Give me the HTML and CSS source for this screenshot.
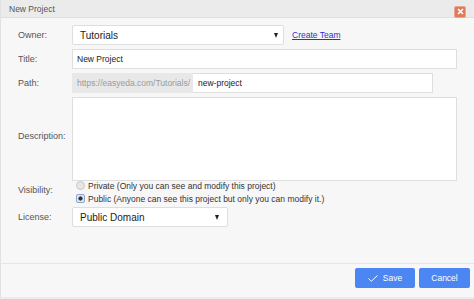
FILE: index.html
```html
<!DOCTYPE html>
<html lang="en">
<head>
    <meta charset="UTF-8">
    <title>New Project</title>
    <link rel="stylesheet" href="styles.css">
</head>
<body>
    <div class="dialog">
        <div class="dialog-title">
            <span>New Project</span>
            <span class="close-btn">
                <svg width="7" height="7" viewBox="0 0 7 7"><path d="M1 1L6 6M6 1L1 6" stroke="#fff" stroke-width="1.6"/></svg>
            </span>
        </div>

        <div class="dialog-body">
            <div class="row">
                <label>Owner:</label>
                <div class="select owner-select">Tutorials<span class="arrow"></span></div>
                <a href="#" class="link">Create Team</a>
            </div>

            <div class="row">
                <label>Title:</label>
                <div class="input wide">New Project</div>
            </div>

            <div class="row">
                <label>Path:</label>
                <div class="path-prefix">https://easyeda.com/Tutorials/</div>
                <div class="input path-input">new-project</div>
            </div>

            <div class="row desc-row">
                <label>Description:</label>
                <div class="textarea"></div>
            </div>

            <div class="row vis-row">
                <label>Visibility:</label>
                <div class="radios">
                    <div class="radio-line"><span class="radio"></span>Private (Only you can see and modify this project)</div>
                    <div class="radio-line"><span class="radio checked"></span>Public (Anyone can see this project but only you can modify it.)</div>
                </div>
            </div>

            <div class="row license-row">
                <label>License:</label>
                <div class="select license-select">Public Domain<span class="arrow"></span></div>
            </div>
        </div>

        <div class="dialog-footer">
            <button class="btn save-btn">
                <svg width="10" height="7" viewBox="0 0 10 7"><path d="M0.5 3.5L3.3 6.2L9.5 0.5" fill="none" stroke="#fff" stroke-width="1"/></svg>
                Save
            </button>
            <button class="btn cancel-btn">Cancel</button>
        </div>
    </div>
</body>
</html>
```

FILE: styles.css
```css
/* General */
body {
    margin: 0;
    padding: 0;
    font-family: "Liberation Sans", Arial, sans-serif;
    background-color: #f7f7f7;
}

.dialog {
    width: 474px;
    height: 299px;
    box-sizing: border-box;
    display: flex;
    flex-direction: column;
    background-color: #f7f7f7;
    border-left: 1px solid #e2e2e2;
    border-bottom: 2px solid #ebebeb;
}

/* Title bar */
.dialog-title {
    height: 17px;
    display: flex;
    align-items: center;
    justify-content: space-between;
    padding: 0 8px 0 8px;
    background-color: #ebebeb;
    border-bottom: 1px solid #dedede;
    color: #555;
    font-size: 8.5px;
}

.close-btn {
    width: 10px;
    height: 10px;
    margin-top: 6px;
    border-radius: 2px;
    background-color: #df7a58;
    border: 1px solid #eaa68c;
    display: flex;
    align-items: center;
    justify-content: center;
}

/* Form */
.dialog-body {
    flex: 1;
    padding: 7px 0 0 17px;
}

.row {
    display: flex;
    align-items: center;
    margin-bottom: 4px;
}

.row label {
    width: 54px;
    color: #555;
    font-size: 9px;
}

.select, .input, .textarea, .path-prefix {
    box-sizing: border-box;
    height: 20px;
    border: 1px solid #dedede;
    background-color: #fff;
    font-size: 8.5px;
    color: #222;
    display: flex;
    align-items: center;
    padding: 0 4px;
}

.select {
    justify-content: space-between;
    font-size: 10px;
    color: #222;
    padding: 0 5px 0 7px;
    border-radius: 2px;
}

.arrow {
    width: 0;
    height: 0;
    border-left: 2.5px solid transparent;
    border-right: 2.5px solid transparent;
    border-top: 5px solid #222;
}

.owner-select {
    width: 212px;
}

.license-select {
    width: 156px;
    padding-right: 8px;
}

.link {
    margin-left: 8px;
    color: #2f2fcc;
    font-size: 8.5px;
}

.wide {
    width: 385px;
}

.path-prefix {
    width: 121px;
    background-color: #e8e8e8;
    border-color: #e8e8e8;
    color: #9a9a9a;
}

.path-input {
    width: 240px;
    border-left: none;
    padding-left: 5px;
}

.desc-row {
    margin-bottom: 0;
}

.desc-row label {
    margin-top: -6px;
}

.textarea {
    width: 385px;
    height: 84px;
}

/* Radios */
.vis-row {
    margin-top: -2px;
    margin-bottom: 2px;
}

.vis-row label {
    margin-top: -4px;
}

.radios {
    padding-left: 4px;
}

.radio-line {
    display: flex;
    align-items: center;
    height: 13px;
    color: #333;
    font-size: 8.5px;
}

.radio {
    width: 7px;
    height: 7px;
    margin-right: 3px;
    border: 1px solid #c8c8c8;
    border-radius: 50%;
    background-color: #e6e6e6;
}

.radio.checked {
    border-radius: 2px;
    border-color: #8aa5cf;
    background: radial-gradient(circle, #333 0, #333 1.8px, #dfe7f3 2.4px);
}

/* Footer */
.dialog-footer {
    height: 29px;
    display: flex;
    justify-content: flex-end;
    align-items: flex-start;
    gap: 4px;
    padding: 4px 4px 0 0;
    border-top: 1px solid #e6e6e6;
}

.btn {
    height: 20px;
    border: none;
    border-radius: 2px;
    background-color: #4c86f3;
    color: #fff;
    font-family: "Liberation Sans", Arial, sans-serif;
    font-size: 8.5px;
    display: flex;
    align-items: center;
    justify-content: center;
    gap: 5px;
    padding: 0;
}

.save-btn {
    width: 60px;
}

.cancel-btn {
    width: 51px;
}
```
